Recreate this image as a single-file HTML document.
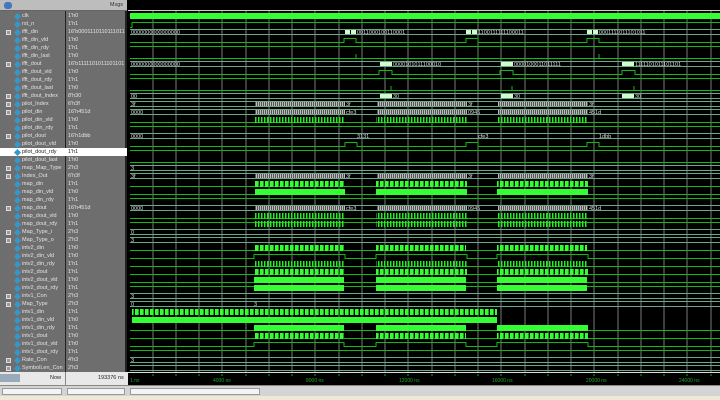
<!DOCTYPE html>
<html><head><meta charset="utf-8"><style>
*{margin:0;padding:0;box-sizing:border-box}
body{width:720px;height:400px;overflow:hidden;background:#000;font-family:"Liberation Sans",sans-serif;position:relative}
#names{position:absolute;left:0;top:0;width:66px;height:372px;background:#6e6e6e;border-right:1px solid #222}
#vals{position:absolute;left:66px;top:0;width:61px;height:372px;background:#6e6e6e;border-right:2px solid #222}
.hdr{position:absolute;top:0;height:11px;background:#bdbdbd;border-bottom:1px solid #666}
.r{position:absolute;height:8px;font-size:5.5px;line-height:8px;color:#e4e4e4;white-space:nowrap}
.n{left:22px}
.v{left:68px}
.d{position:absolute;left:15px;width:5px;height:5px;background:#39c;transform:rotate(45deg)}
.p{position:absolute;left:6px;width:5px;height:5px;border:1px solid #ddd;background:#999}
.sel{position:absolute;left:0;width:127px;height:8px;background:#fff}
#now{position:absolute;left:0;top:372px;width:128px;height:13px;background:#e8e8e8;font-size:5.5px;color:#222}
#scroll{position:absolute;left:0;top:385px;width:720px;height:11px;background:#d4d4d4;border-top:1px solid #888}
#task{position:absolute;left:0;top:396px;width:720px;height:4px;background:#ece9d8}
</style></head><body>
<div id="names"><div class="hdr" style="left:0;width:66px"><div style="position:absolute;left:4px;top:2px;width:8px;height:7px;background:#47b;border-radius:3px"></div></div></div>
<div id="vals"><div class="hdr" style="left:0;width:61px"><span style="position:absolute;right:4px;top:2px;font-size:5.5px;color:#333">Msgs</span></div></div>
<div class="sel" style="top:148px"></div>

<div class="d" style="top:14px"></div><div class="r n" style="top:12px">clk</div><div class="r v" style="top:12px">1'h0</div>
<div class="d" style="top:22px"></div><div class="r n" style="top:20px">rst_n</div><div class="r v" style="top:20px">1'h1</div>
<div class="p" style="top:30px"></div><div class="d" style="top:30px"></div><div class="r n" style="top:28px">ifft_din</div><div class="r v" style="top:28px">16'b0001110110111011</div>
<div class="d" style="top:38px"></div><div class="r n" style="top:36px">ifft_din_vld</div><div class="r v" style="top:36px">1'h0</div>
<div class="d" style="top:46px"></div><div class="r n" style="top:44px">ifft_din_rdy</div><div class="r v" style="top:44px">1'h1</div>
<div class="d" style="top:54px"></div><div class="r n" style="top:52px">ifft_din_last</div><div class="r v" style="top:52px">1'h0</div>
<div class="p" style="top:62px"></div><div class="d" style="top:62px"></div><div class="r n" style="top:60px">ifft_dout</div><div class="r v" style="top:60px">16'b1111101011101101</div>
<div class="d" style="top:70px"></div><div class="r n" style="top:68px">ifft_dout_vld</div><div class="r v" style="top:68px">1'h0</div>
<div class="d" style="top:78px"></div><div class="r n" style="top:76px">ifft_dout_rdy</div><div class="r v" style="top:76px">1'h1</div>
<div class="d" style="top:86px"></div><div class="r n" style="top:84px">ifft_dout_last</div><div class="r v" style="top:84px">1'h0</div>
<div class="p" style="top:94px"></div><div class="d" style="top:94px"></div><div class="r n" style="top:92px">ifft_dout_Index</div><div class="r v" style="top:92px">8'h30</div>
<div class="p" style="top:102px"></div><div class="d" style="top:102px"></div><div class="r n" style="top:100px">pilot_Index</div><div class="r v" style="top:100px">6'h3f</div>
<div class="p" style="top:110px"></div><div class="d" style="top:110px"></div><div class="r n" style="top:108px">pilot_din</div><div class="r v" style="top:108px">16'h451d</div>
<div class="d" style="top:118px"></div><div class="r n" style="top:116px">pilot_din_vld</div><div class="r v" style="top:116px">1'h0</div>
<div class="d" style="top:126px"></div><div class="r n" style="top:124px">pilot_din_rdy</div><div class="r v" style="top:124px">1'h1</div>
<div class="p" style="top:134px"></div><div class="d" style="top:134px"></div><div class="r n" style="top:132px">pilot_dout</div><div class="r v" style="top:132px">16'h1dbb</div>
<div class="d" style="top:142px"></div><div class="r n" style="top:140px">pilot_dout_vld</div><div class="r v" style="top:140px">1'h0</div>
<div class="d" style="top:150px"></div><div class="r n" style="top:148px;color:#222">pilot_dout_rdy</div><div class="r v" style="top:148px;color:#222">1'h1</div>
<div class="d" style="top:158px"></div><div class="r n" style="top:156px">pilot_dout_last</div><div class="r v" style="top:156px">1'h0</div>
<div class="p" style="top:166px"></div><div class="d" style="top:166px"></div><div class="r n" style="top:164px">map_Map_Type</div><div class="r v" style="top:164px">2'h3</div>
<div class="p" style="top:174px"></div><div class="d" style="top:174px"></div><div class="r n" style="top:172px">Index_Out</div><div class="r v" style="top:172px">6'h3f</div>
<div class="d" style="top:182px"></div><div class="r n" style="top:180px">map_din</div><div class="r v" style="top:180px">1'h1</div>
<div class="d" style="top:190px"></div><div class="r n" style="top:188px">map_din_vld</div><div class="r v" style="top:188px">1'h0</div>
<div class="d" style="top:198px"></div><div class="r n" style="top:196px">map_din_rdy</div><div class="r v" style="top:196px">1'h1</div>
<div class="p" style="top:206px"></div><div class="d" style="top:206px"></div><div class="r n" style="top:204px">map_dout</div><div class="r v" style="top:204px">16'h451d</div>
<div class="d" style="top:214px"></div><div class="r n" style="top:212px">map_dout_vld</div><div class="r v" style="top:212px">1'h0</div>
<div class="d" style="top:222px"></div><div class="r n" style="top:220px">map_dout_rdy</div><div class="r v" style="top:220px">1'h1</div>
<div class="p" style="top:230px"></div><div class="d" style="top:230px"></div><div class="r n" style="top:228px">Map_Type_i</div><div class="r v" style="top:228px">2'h3</div>
<div class="p" style="top:238px"></div><div class="d" style="top:238px"></div><div class="r n" style="top:236px">Map_Type_o</div><div class="r v" style="top:236px">2'h3</div>
<div class="d" style="top:246px"></div><div class="r n" style="top:244px">intv2_din</div><div class="r v" style="top:244px">1'h0</div>
<div class="d" style="top:254px"></div><div class="r n" style="top:252px">intv2_din_vld</div><div class="r v" style="top:252px">1'h0</div>
<div class="d" style="top:262px"></div><div class="r n" style="top:260px">intv2_din_rdy</div><div class="r v" style="top:260px">1'h1</div>
<div class="d" style="top:270px"></div><div class="r n" style="top:268px">intv2_dout</div><div class="r v" style="top:268px">1'h1</div>
<div class="d" style="top:278px"></div><div class="r n" style="top:276px">intv2_dout_vld</div><div class="r v" style="top:276px">1'h0</div>
<div class="d" style="top:286px"></div><div class="r n" style="top:284px">intv2_dout_rdy</div><div class="r v" style="top:284px">1'h1</div>
<div class="p" style="top:294px"></div><div class="d" style="top:294px"></div><div class="r n" style="top:292px">intv1_Con</div><div class="r v" style="top:292px">2'h3</div>
<div class="p" style="top:302px"></div><div class="d" style="top:302px"></div><div class="r n" style="top:300px">Map_Type</div><div class="r v" style="top:300px">2'h3</div>
<div class="d" style="top:310px"></div><div class="r n" style="top:308px">intv1_din</div><div class="r v" style="top:308px">1'h1</div>
<div class="d" style="top:318px"></div><div class="r n" style="top:316px">intv1_din_vld</div><div class="r v" style="top:316px">1'h0</div>
<div class="d" style="top:326px"></div><div class="r n" style="top:324px">intv1_din_rdy</div><div class="r v" style="top:324px">1'h1</div>
<div class="d" style="top:334px"></div><div class="r n" style="top:332px">intv1_dout</div><div class="r v" style="top:332px">1'h0</div>
<div class="d" style="top:342px"></div><div class="r n" style="top:340px">intv1_dout_vld</div><div class="r v" style="top:340px">1'h0</div>
<div class="d" style="top:350px"></div><div class="r n" style="top:348px">intv1_dout_rdy</div><div class="r v" style="top:348px">1'h1</div>
<div class="p" style="top:358px"></div><div class="d" style="top:358px"></div><div class="r n" style="top:356px">Rate_Con</div><div class="r v" style="top:356px">4'h3</div>
<div class="p" style="top:366px"></div><div class="d" style="top:366px"></div><div class="r n" style="top:364px;height:7px;overflow:hidden">SymbolLen_Con</div><div class="r v" style="top:364px;height:7px;overflow:hidden">2'h3</div>

<div id="now"><div style="position:absolute;left:0;top:2px;width:20px;height:8px;background:#9ab"></div><span style="position:absolute;left:50px;top:3px">Now</span><span style="position:absolute;left:98px;top:3px">193376 ns</span><div style="position:absolute;left:65px;top:0;width:1px;height:13px;background:#888"></div></div>

<svg style="position:absolute;left:128px;top:0" width="592" height="385" viewBox="128 0 592 385" font-family="Liberation Sans" font-size="5.5">
<defs>
<pattern id="spk" width="5" height="8" patternUnits="userSpaceOnUse"><rect width="3" height="8" fill="#3f3"/><rect x="3" width="1" height="8" fill="#1a1"/></pattern>
<pattern id="spk2" width="3" height="8" patternUnits="userSpaceOnUse"><rect width="1.5" height="8" fill="#2e2"/></pattern>
<pattern id="gb" width="2" height="8" patternUnits="userSpaceOnUse"><rect width="1" height="8" fill="#bbb"/><rect x="1" width="1" height="8" fill="#555"/></pattern>
</defs>
<rect x="128" y="0" width="592" height="372" fill="#000"/>
<line x1="128" y1="10.5" x2="720" y2="10.5" stroke="#ccc"/>
<g stroke="#7a7a7a" stroke-width="1">
<path d="M153 11V372M176 11V372M199 11V372M222 11V372M246 11V372M269 11V372M292 11V372M315 11V372M339 11V372M362 11V372M385 11V372M408 11V372M432 11V372M455 11V372M478 11V372M501 11V372M525 11V372M548 11V372M571 11V372M594 11V372M618 11V372M641 11V372M664 11V372M687 11V372M711 11V372"/>
</g>
<rect x="130" y="13" width="590" height="6" fill="#3f3"/>
<g fill="none" stroke="#1b1" stroke-width="1">
<path d="M130 27.5H132V22.5H720"/>
<path d="M130 42.5H344V38.5H356V42.5H466V38.5H478V42.5H587V38.5H599V42.5H720"/>
<path d="M130 46.5H720"/>
<path d="M130 58.5H720M356 54V58M478 54V58M599 54V58"/>
<path d="M130 74.5H379V70.5H392V74.5H500V70.5H513V74.5H622V70.5H635V74.5H720"/>
<path d="M130 78.5H720"/>
<path d="M130 90.5H720M391 86V90M512 86V90M634 86V90"/>
<path d="M130 122.5H720M130 126.5H720"/>
<path d="M130 146.5H345V142.5H357V146.5H466V142.5H478V146.5H587V142.5H599V146.5H720"/>
<path d="M130 150.5H720"/>
<path d="M130 162.5H720"/>
<path d="M130 186.5H720M130 194.5H720M130 198.5H720M130 218.5H720M130 222.5H720"/>
<path d="M130 250.5H720"/>
<path d="M130 258.5H254V254.5H345V258.5H376V254.5H467V258.5H497V254.5H588V258.5H720"/>
<path d="M130 266.5H720M130 274.5H720M130 282.5H720M130 286.5H720"/>
<path d="M130 330.5H720M130 338.5H720"/>
<path d="M130 346.5H254V342.5H344V346.5H376V342.5H466V346.5H497V342.5H588V346.5H720"/>
<path d="M130 350.5H720"/>
</g>
<g fill="none" stroke="#6a8" stroke-width="1">
<path d="M130 29.5H720M130 34.5H720"/>
<path d="M130 61.5H720M130 66.5H720"/>
<path d="M130 93.5H720M130 98.5H720"/>
<path d="M130 101.5H720M130 106.5H720"/>
<path d="M130 109.5H720M130 114.5H720"/>
<path d="M130 133.5H720M130 138.5H720"/>
<path d="M130 165.5H720M130 170.5H720"/>
<path d="M130 173.5H720M130 178.5H720"/>
<path d="M130 205.5H720M130 210.5H720"/>
<path d="M130 229.5H720M130 234.5H720"/>
<path d="M130 237.5H720M130 242.5H720"/>
<path d="M130 293.5H720M130 298.5H720"/>
<path d="M130 301.5H720M130 306.5H720"/>
<path d="M130 357.5H720M130 362.5H720"/>
<path d="M130 365.5H720M130 370.5H720"/>
</g>
<g fill="#cfc">
<rect x="345" y="30" width="5" height="4"/><rect x="351" y="30" width="5" height="4"/>
<rect x="466" y="30" width="5" height="4"/><rect x="472" y="30" width="5" height="4"/>
<rect x="587" y="30" width="5" height="4"/><rect x="593" y="30" width="5" height="4"/>
<rect x="380" y="62" width="12" height="4"/><rect x="501" y="62" width="12" height="4"/><rect x="622" y="62" width="12" height="4"/>
<rect x="380" y="94" width="12" height="4"/><rect x="501" y="94" width="12" height="4"/><rect x="622" y="94" width="12" height="4"/>
</g>
<g fill="url(#gb)">
<rect x="255" y="102" width="90" height="4"/><rect x="377" y="102" width="90" height="4"/><rect x="498" y="102" width="90" height="4"/>
<rect x="255" y="110" width="90" height="4"/><rect x="377" y="110" width="90" height="4"/><rect x="498" y="110" width="90" height="4"/>
<rect x="255" y="174" width="90" height="4"/><rect x="377" y="174" width="90" height="4"/><rect x="498" y="174" width="90" height="4"/>
<rect x="255" y="206" width="90" height="4"/><rect x="377" y="206" width="90" height="4"/><rect x="498" y="206" width="90" height="4"/>
</g>
<g>
<rect x="255" y="117" width="90" height="6" fill="url(#spk2)"/><rect x="376" y="117" width="91" height="6" fill="url(#spk2)"/><rect x="497" y="117" width="91" height="6" fill="url(#spk2)"/>
<rect x="255" y="181" width="90" height="6" fill="url(#spk)"/><rect x="376" y="181" width="91" height="6" fill="url(#spk)"/><rect x="497" y="181" width="91" height="6" fill="url(#spk)"/>
<rect x="255" y="189" width="90" height="6" fill="#3f3"/><rect x="376" y="189" width="91" height="6" fill="#3f3"/><rect x="497" y="189" width="91" height="6" fill="#3f3"/>
<rect x="255" y="213" width="90" height="6" fill="url(#spk2)"/><rect x="376" y="213" width="91" height="6" fill="url(#spk2)"/><rect x="497" y="213" width="91" height="6" fill="url(#spk2)"/>
<rect x="255" y="221" width="90" height="6" fill="url(#spk2)"/><rect x="376" y="221" width="91" height="6" fill="url(#spk2)"/><rect x="497" y="221" width="91" height="6" fill="url(#spk2)"/>
<rect x="254" y="245" width="90" height="6" fill="url(#spk)"/><rect x="376" y="245" width="90" height="6" fill="url(#spk)"/><rect x="497" y="245" width="90" height="6" fill="url(#spk)"/>
<rect x="255" y="261" width="90" height="6" fill="url(#spk2)"/><rect x="376" y="261" width="91" height="6" fill="url(#spk2)"/><rect x="497" y="261" width="91" height="6" fill="url(#spk2)"/>
<rect x="255" y="269" width="90" height="6" fill="url(#spk)"/><rect x="376" y="269" width="91" height="6" fill="url(#spk)"/><rect x="497" y="269" width="91" height="6" fill="url(#spk)"/>
<rect x="254" y="277" width="90" height="6" fill="#3f3"/><rect x="376" y="277" width="90" height="6" fill="#3f3"/><rect x="497" y="277" width="90" height="6" fill="#3f3"/>
<rect x="254" y="285" width="90" height="6" fill="#3f3"/><rect x="376" y="285" width="90" height="6" fill="#3f3"/><rect x="497" y="285" width="90" height="6" fill="#3f3"/>
<rect x="132" y="309" width="365" height="6" fill="url(#spk)"/>
<rect x="132" y="317" width="365" height="6" fill="#3f3"/>
<rect x="254" y="325" width="90" height="6" fill="#3f3"/><rect x="376" y="325" width="90" height="6" fill="#3f3"/><rect x="497" y="325" width="91" height="6" fill="#3f3"/>
<rect x="254" y="333" width="90" height="6" fill="url(#spk)"/><rect x="376" y="333" width="90" height="6" fill="url(#spk)"/><rect x="497" y="333" width="91" height="6" fill="url(#spk)"/>
</g>
<g fill="#ddd">
<text x="131" y="34">0000000000000000</text><text x="357" y="34">0011000100110001</text><text x="478" y="34">1100111111100011</text><text x="599" y="34">0001111011101011</text>
<text x="131" y="66">0000000000000000</text><text x="393" y="66">0000101011100010</text><text x="514" y="66">0000100011011111</text><text x="635" y="66">1111101011101101</text>
<text x="131" y="98">00</text><text x="393" y="98">30</text><text x="514" y="98">30</text><text x="635" y="98">30</text>
<text x="131" y="106">3f</text><text x="346" y="106">3f</text><text x="468" y="106">3f</text><text x="589" y="106">3f</text>
<text x="131" y="114">0000</text><text x="346" y="114">cfe3</text><text x="468" y="114">0945</text><text x="589" y="114">451d</text>
<text x="131" y="138">0000</text><text x="357" y="138">3131</text><text x="478" y="138">cfe3</text><text x="599" y="138">1dbb</text>
<text x="131" y="170">3</text>
<text x="131" y="178">3f</text><text x="346" y="178">3f</text><text x="468" y="178">3f</text><text x="589" y="178">3f</text>
<text x="131" y="210">0000</text><text x="346" y="210">cfe3</text><text x="468" y="210">0945</text><text x="589" y="210">451d</text>
<text x="131" y="234">0</text><text x="131" y="242">3</text>
<text x="131" y="298">3</text><text x="131" y="306">0</text><text x="254" y="306">3</text>
<text x="131" y="362">3</text>
</g>
<rect x="128" y="372" width="592" height="13" fill="#000"/>
<line x1="128" y1="372.5" x2="720" y2="372.5" stroke="#ddd"/>
<g fill="#2a2" font-size="5">
<text x="130" y="382">1 ns</text><text x="213" y="382">4000 ns</text><text x="306" y="382">8000 ns</text><text x="399" y="382">12000 ns</text><text x="492" y="382">16000 ns</text><text x="586" y="382">20000 ns</text><text x="679" y="382">24000 ns</text>
</g>
<g stroke="#1a1"><path d="M153 374V376M176 374V376M199 374V376M222 374V376M246 374V376M269 374V376M292 374V376M315 374V376M339 374V376M362 374V376M385 374V376M408 374V376M432 374V376M455 374V376M478 374V376M501 374V376M525 374V376M548 374V376M571 374V376M594 374V376M618 374V376M641 374V376M664 374V376M687 374V376M711 374V376"/></g>
</svg>

<div id="scroll">
<div style="position:absolute;left:2px;top:2px;width:60px;height:7px;background:#f4f4f4;border:1px solid #999"></div>
<div style="position:absolute;left:67px;top:2px;width:58px;height:7px;background:#f4f4f4;border:1px solid #999"></div>
<div style="position:absolute;left:130px;top:2px;width:130px;height:7px;background:#f4f4f4;border:1px solid #999"></div>
</div>
<div id="task"></div>
</body></html>
